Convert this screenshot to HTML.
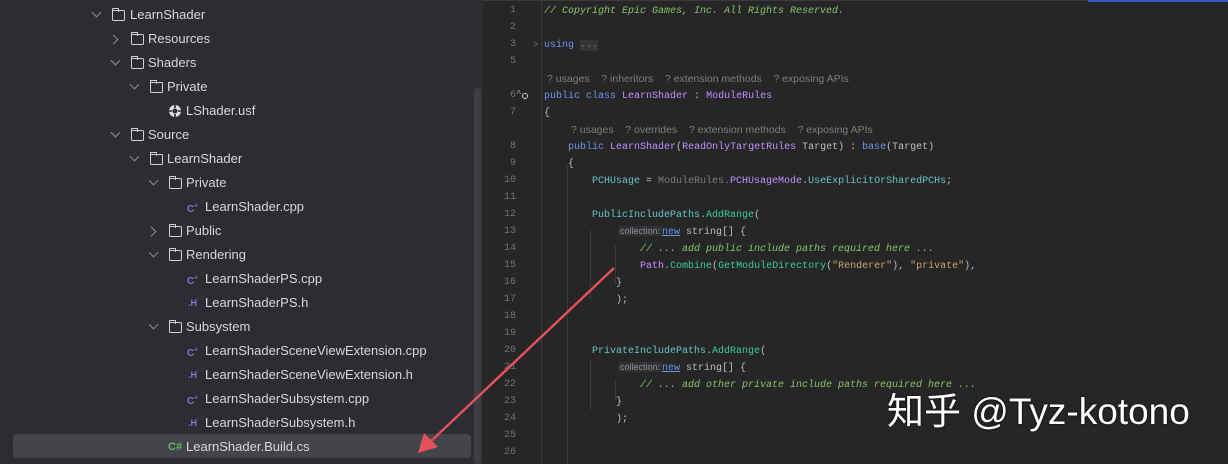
<!DOCTYPE html>
<html><head><meta charset="utf-8"><style>
*{margin:0;padding:0;box-sizing:border-box}
body{width:1228px;height:464px;overflow:hidden;background:#262626;position:relative;font-family:"Liberation Sans",sans-serif}
#left{position:absolute;left:0;top:0;width:483px;height:464px;background:#2b2d30}
#sb{position:absolute;left:474px;top:88px;width:7px;height:376px;background:#3d3f43;border-radius:3px}
.row{position:absolute;height:24px;line-height:24px;font-size:13px;color:#d5d7db;white-space:nowrap}
.chev{position:absolute;width:7px;height:7px;border-right:1.2px solid #8c8f94;border-bottom:1.2px solid #8c8f94}
.fold{position:absolute;width:13px;height:11px;border:1.2px solid #ced0d6;border-radius:1.5px;top:7px}
.fold:before{content:"";position:absolute;left:-1px;top:-3px;width:5px;height:3px;border:1.2px solid #ced0d6;border-bottom:none;border-radius:1px 1px 0 0}
#sel{position:absolute;left:13px;top:434px;width:458px;height:24px;background:#43454a;border-radius:4px}
#ed{position:absolute;left:483px;top:0;width:745px;height:464px;background:#262626}
.ln{position:absolute;left:494px;width:22px;text-align:right;font:10px "Liberation Mono",monospace;color:#6f737a}
.c{position:absolute;font:10px/17px "Liberation Mono",monospace;color:#bcbec4;white-space:pre}
.h{position:absolute;font:10.5px "Liberation Sans",sans-serif;color:#7a7e85;white-space:pre}
.kw{color:#6c95eb}.cl{color:#c191ff}.cm{color:#85c46c;font-style:italic}.st{color:#c9a26d}.tl{color:#66c3cc}.gr{color:#39cc9b}.dm{color:#7a7e85}
.coll{font:9px "Liberation Sans",sans-serif;color:#8a8d92;background:#313235;padding:0 2px;border-radius:2px}
.vg{position:absolute;width:1px;background:#3a3a3a}
#wm{position:absolute;left:887px;top:381px;font-size:37px;color:#fff;font-family:"Liberation Sans","Noto Sans CJK SC",sans-serif;white-space:nowrap;text-shadow:0 0 2px #000}
</style></head><body>
<div id="left">
<div id="sel"></div>
<div id="sb"></div>
</div>
<div class="chev" style="left:93px;top:9px;transform:rotate(45deg)"></div><div class="fold" style="left:112px;top:10px"></div><div class="row" style="left:130px;top:3px">LearnShader</div>
<div class="chev" style="left:110px;top:36px;transform:rotate(-45deg)"></div><div class="fold" style="left:131px;top:34px"></div><div class="row" style="left:148px;top:27px">Resources</div>
<div class="chev" style="left:112px;top:57px;transform:rotate(45deg)"></div><div class="fold" style="left:131px;top:58px"></div><div class="row" style="left:148px;top:51px">Shaders</div>
<div class="chev" style="left:131px;top:81px;transform:rotate(45deg)"></div><div class="fold" style="left:150px;top:82px"></div><div class="row" style="left:167px;top:75px">Private</div>
<svg style="position:absolute;left:168px;top:104px" width="14" height="14" viewBox="0 0 14 14"><circle cx="7" cy="7" r="6" fill="#ddd"/><circle cx="7" cy="7" r="2.5" fill="#2b2d30"/><path d="M7 1v3M7 10v3M1 7h3M10 7h3" stroke="#2b2d30" stroke-width="1.6"/></svg><div class="row" style="left:186px;top:99px">LShader.usf</div>
<div class="chev" style="left:112px;top:129px;transform:rotate(45deg)"></div><div class="fold" style="left:131px;top:130px"></div><div class="row" style="left:148px;top:123px">Source</div>
<div class="chev" style="left:131px;top:153px;transform:rotate(45deg)"></div><div class="fold" style="left:150px;top:154px"></div><div class="row" style="left:167px;top:147px">LearnShader</div>
<div class="chev" style="left:150px;top:177px;transform:rotate(45deg)"></div><div class="fold" style="left:169px;top:178px"></div><div class="row" style="left:186px;top:171px">Private</div>
<div class="row" style="left:187px;top:195px"><span style="color:#8f6fd8;font-size:10px;font-weight:bold">C<sup style="font-size:6px">+</sup></span></div><div class="row" style="left:205px;top:195px">LearnShader.cpp</div>
<div class="chev" style="left:148px;top:228px;transform:rotate(-45deg)"></div><div class="fold" style="left:169px;top:226px"></div><div class="row" style="left:186px;top:219px">Public</div>
<div class="chev" style="left:150px;top:249px;transform:rotate(45deg)"></div><div class="fold" style="left:169px;top:250px"></div><div class="row" style="left:186px;top:243px">Rendering</div>
<div class="row" style="left:187px;top:267px"><span style="color:#8f6fd8;font-size:10px;font-weight:bold">C<sup style="font-size:6px">+</sup></span></div><div class="row" style="left:205px;top:267px">LearnShaderPS.cpp</div>
<div class="row" style="left:188px;top:291px;color:#8f6fd8;font-size:9px;font-weight:bold">.H</div><div class="row" style="left:205px;top:291px">LearnShaderPS.h</div>
<div class="chev" style="left:150px;top:321px;transform:rotate(45deg)"></div><div class="fold" style="left:169px;top:322px"></div><div class="row" style="left:186px;top:315px">Subsystem</div>
<div class="row" style="left:187px;top:339px"><span style="color:#8f6fd8;font-size:10px;font-weight:bold">C<sup style="font-size:6px">+</sup></span></div><div class="row" style="left:205px;top:339px">LearnShaderSceneViewExtension.cpp</div>
<div class="row" style="left:188px;top:363px;color:#8f6fd8;font-size:9px;font-weight:bold">.H</div><div class="row" style="left:205px;top:363px">LearnShaderSceneViewExtension.h</div>
<div class="row" style="left:187px;top:387px"><span style="color:#8f6fd8;font-size:10px;font-weight:bold">C<sup style="font-size:6px">+</sup></span></div><div class="row" style="left:205px;top:387px">LearnShaderSubsystem.cpp</div>
<div class="row" style="left:188px;top:411px;color:#8f6fd8;font-size:9px;font-weight:bold">.H</div><div class="row" style="left:205px;top:411px">LearnShaderSubsystem.h</div>
<div class="row" style="left:168px;top:435px;color:#5fb865;font-size:11px;font-weight:bold">C#</div><div class="row" style="left:186px;top:435px">LearnShader.Build.cs</div>

<div id="ed"></div>
<div style="position:absolute;left:483px;top:0;width:745px;height:1px;background:#3a3a3a"></div>
<div style="position:absolute;left:1088px;top:0;width:140px;height:2px;background:#3458c8"></div>
<div class="vg" style="left:541px;top:0;height:464px"></div>
<div class="vg" style="left:567px;top:165px;height:299px"></div>
<div class="vg" style="left:590px;top:230px;height:70px"></div>
<div class="vg" style="left:615px;top:245px;height:40px"></div>
<div class="vg" style="left:590px;top:360px;height:50px"></div>
<div class="vg" style="left:615px;top:380px;height:20px"></div>

<div class="ln" style="top:5px">1</div><div class="ln" style="top:22px">2</div><div class="ln" style="top:39px">3</div><div class="ln" style="top:56px">5</div>
<div class="ln" style="top:90px">6</div><div class="ln" style="top:107px">7</div><div class="ln" style="top:141px">8</div><div class="ln" style="top:158px">9</div>
<div class="ln" style="top:175px">10</div><div class="ln" style="top:192px">11</div><div class="ln" style="top:209px">12</div><div class="ln" style="top:226px">13</div><div class="ln" style="top:243px">14</div><div class="ln" style="top:260px">15</div><div class="ln" style="top:277px">16</div><div class="ln" style="top:294px">17</div><div class="ln" style="top:311px">18</div><div class="ln" style="top:328px">19</div><div class="ln" style="top:345px">20</div><div class="ln" style="top:362px">21</div><div class="ln" style="top:379px">22</div><div class="ln" style="top:396px">23</div><div class="ln" style="top:413px">24</div><div class="ln" style="top:430px">25</div><div class="ln" style="top:447px">26</div>
<div class="c" style="left:533px;top:37px;color:#6f737a;font-size:9px">&gt;</div>
<div class="c" style="left:516px;top:86px;color:#aaa;font-size:9px">^</div><div style="position:absolute;left:522px;top:93px;width:6px;height:6px;border:1.5px solid #ccc;border-radius:50%"></div>

<div class="c" style="left:544px;top:3px"><span class="cm">// Copyright Epic Games, Inc. All Rights Reserved.</span></div>
<div class="c" style="left:544px;top:37px"><span class="kw">using</span> <span class="dm" style="background:#353535">...</span></div>
<div class="h" style="left:547px;top:73px">? usages    ? inheritors    ? extension methods    ? exposing APIs</div>
<div class="c" style="left:544px;top:88px"><span class="kw">public class</span> <span class="cl">LearnShader</span> : <span class="cl">ModuleRules</span></div>
<div class="c" style="left:544px;top:105px">{</div>
<div class="h" style="left:571px;top:124px">? usages    ? overrides    ? extension methods    ? exposing APIs</div>
<div class="c" style="left:568px;top:139px"><span class="kw">public</span> <span class="cl">LearnShader</span>(<span class="cl">ReadOnlyTargetRules</span> Target) : <span class="kw">base</span>(Target)</div>
<div class="c" style="left:568px;top:156px">{</div>
<div class="c" style="left:592px;top:173px"><span class="tl">PCHUsage</span> = <span class="dm">ModuleRules.</span><span class="cl">PCHUsageMode</span>.<span class="tl">UseExplicitOrSharedPCHs</span>;</div>
<div class="c" style="left:592px;top:207px"><span class="tl">PublicIncludePaths</span>.<span class="gr">AddRange</span>(</div>
<div class="c" style="left:618px;top:224px"><span class="coll">collection:</span><span class="kw" style="text-decoration:underline">new</span> string[] {</div>
<div class="c" style="left:640px;top:241px"><span class="cm">// ... add public include paths required here ...</span></div>
<div class="c" style="left:640px;top:258px"><span class="cl">Path</span>.<span class="gr">Combine</span>(<span class="gr">GetModuleDirectory</span>(<span class="st">"Renderer"</span>), <span class="st">"private"</span>),</div>
<div class="c" style="left:616px;top:275px">}</div>
<div class="c" style="left:616px;top:292px">);</div>
<div class="c" style="left:592px;top:343px"><span class="tl">PrivateIncludePaths</span>.<span class="gr">AddRange</span>(</div>
<div class="c" style="left:618px;top:360px"><span class="coll">collection:</span><span class="kw" style="text-decoration:underline">new</span> string[] {</div>
<div class="c" style="left:640px;top:377px"><span class="cm">// ... add other private include paths required here ...</span></div>
<div class="c" style="left:616px;top:394px">}</div>
<div class="c" style="left:616px;top:411px">);</div>

<svg style="position:absolute;left:0;top:0" width="1228" height="464"><line x1="614" y1="268" x2="428" y2="444" stroke="#e5505a" stroke-width="2.5"/><polygon points="418,453 424,433 438,447" fill="#e5505a"/></svg>
<div id="wm">知乎 @Tyz-kotono</div>
</body></html>
